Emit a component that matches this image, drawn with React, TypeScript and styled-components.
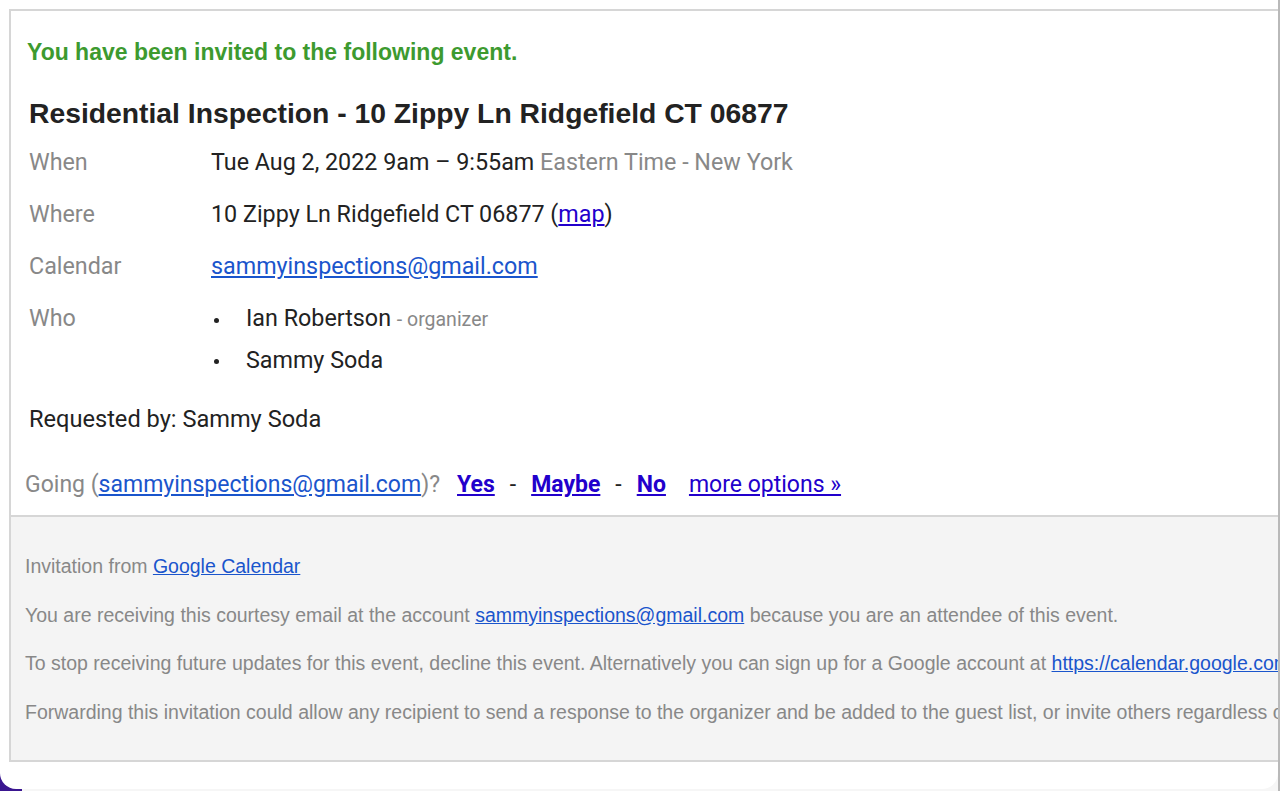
import React from "react";
import styled, { createGlobalStyle } from "styled-components";

const Global = createGlobalStyle`
  html, body { margin: 0; padding: 0; }
  body {
    width: 1280px;
    height: 791px;
    overflow: hidden;
    background: linear-gradient(90deg, #3a1690 0, #3a1690 22px, #f6f6f6 22px);
  }
`;

const Desktop = styled.div`
  display: flex;
  width: 1280px;
  height: 791px;
`;

const Window = styled.div`
  width: 1278px;
  height: 789px;
  background: #ffffff;
  border-radius: 0 0 16px 16px;
  overflow: hidden;
  padding: 9px 0 0 9px;
  box-sizing: border-box;
`;

const EdgeStrip = styled.div`
  width: 2px;
  height: 791px;
  background: #b9b9b9;
`;

const Card = styled.div`
  width: 1320px;
  border: 2px solid #d6d6d6;
  border-right: none;
  background: #ffffff;
  box-sizing: border-box;
`;

const Main = styled.div`
  padding: 27px 0 16px 16px;
  font-family: Roboto, "Liberation Sans", Arial, sans-serif;
  font-size: 23px;
  color: #222222;
`;

const Invited = styled.div`
  font-family: "Liberation Sans", Arial, sans-serif;
  font-weight: bold;
  font-size: 23px;
  line-height: 28px;
  color: #3d9a2f;
`;

const Title = styled.h1`
  margin: 30px 0 0 2px;
  font-family: "Liberation Sans", Arial, sans-serif;
  font-weight: bold;
  font-size: 28.3px;
  line-height: 34px;
  color: #222222;
`;

const Details = styled.div`
  display: grid;
  grid-template-columns: 182px 1fr;
  margin: 10px 0 0 2px;
  font-size: 23.3px;
`;

const Label = styled.div`
  color: #888888;
  line-height: 28px;
  padding: 8px 0 16px;
`;

const Value = styled.div`
  color: #222222;
  line-height: 28px;
  padding: 8px 0 16px;
`;

const Muted = styled.span`
  color: #888888;
`;

const SmallMuted = styled.span`
  color: #888888;
  font-size: 19.5px;
`;

const Link = styled.a`
  color: #1a55cc;
  text-decoration: underline;
`;

const DarkLink = styled.a<{ $bold?: boolean }>`
  color: #2200cc;
  text-decoration: underline;
  font-weight: ${(p) => (p.$bold ? 700 : 400)};
`;

const Guests = styled.ul`
  margin: 0;
  padding: 0;
  list-style: none;
  display: flex;
  flex-direction: column;
  gap: 12px;
`;

const Guest = styled.li`
  display: flex;
  align-items: baseline;
  line-height: 28px;
  white-space: pre;
`;

const Bullet = styled.span`
  flex: 0 0 35px;
  align-self: center;
  &::before {
    content: "";
    display: block;
    width: 5px;
    height: 5px;
    margin: 3px 0 0 3px;
    border-radius: 50%;
    background: #222222;
  }
`;

const Requested = styled.div`
  margin: 15px 0 0 2px;
  line-height: 28px;
  font-size: 23.6px;
  color: #222222;
`;

const Going = styled.div`
  display: flex;
  align-items: baseline;
  margin: 38px 0 0 -2px;
  line-height: 28px;
  color: #888888;
  white-space: nowrap;
`;

const Response = styled.div`
  display: flex;
  align-items: baseline;
  margin-left: 17px;
`;

const Dash = styled.span`
  color: #222222;
  margin: 0 15px;
`;

const MoreOptions = styled(DarkLink)`
  margin-left: 23px;
`;

const Footer = styled.div`
  border-top: 2px solid #d6d6d6;
  background: #f4f4f4;
  padding: 38px 0 0 14px;
  font-family: "Liberation Sans", Arial, sans-serif;
  font-size: 19.5px;
  color: #888888;
  height: 245px;
  box-sizing: border-box;
  overflow: hidden;
`;

const FooterLine = styled.p`
  margin: 0 0 26.5px;
  line-height: 22px;
  white-space: nowrap;
`;

export default function App() {
  const email = "sammyinspections@gmail.com";
  return (
    <>
      <Global />
      <Desktop>
        <Window>
          <Card>
            <Main>
              <Invited>You have been invited to the following event.</Invited>
              <Title>Residential Inspection - 10 Zippy Ln Ridgefield CT 06877</Title>
              <Details>
                <Label>When</Label>
                <Value>
                  Tue Aug 2, 2022 9am – 9:55am <Muted>Eastern Time - New York</Muted>
                </Value>
                <Label>Where</Label>
                <Value>
                  10 Zippy Ln Ridgefield CT 06877 (<DarkLink href="#">map</DarkLink>)
                </Value>
                <Label>Calendar</Label>
                <Value>
                  <Link href="#">{email}</Link>
                </Value>
                <Label>Who</Label>
                <Value>
                  <Guests>
                    <Guest>
                      <Bullet />
                      Ian Robertson <SmallMuted>- organizer</SmallMuted>
                    </Guest>
                    <Guest>
                      <Bullet />
                      Sammy Soda
                    </Guest>
                  </Guests>
                </Value>
              </Details>
              <Requested>Requested by: Sammy Soda</Requested>
              <Going>
                Going (<Link href="#">{email}</Link>)?
                <Response>
                  <DarkLink $bold href="#">Yes</DarkLink>
                  <Dash>-</Dash>
                  <DarkLink $bold href="#">Maybe</DarkLink>
                  <Dash>-</Dash>
                  <DarkLink $bold href="#">No</DarkLink>
                  <MoreOptions href="#">more options »</MoreOptions>
                </Response>
              </Going>
            </Main>
            <Footer>
              <FooterLine>
                Invitation from <Link href="#">Google Calendar</Link>
              </FooterLine>
              <FooterLine>
                You are receiving this courtesy email at the account <Link href="#">{email}</Link> because you are an attendee of this event.
              </FooterLine>
              <FooterLine>
                To stop receiving future updates for this event, decline this event. Alternatively you can sign up for a Google account at <Link href="#">https://calendar.google.com/calendar/</Link> and control your notification settings for your entire calendar.
              </FooterLine>
              <FooterLine>
                Forwarding this invitation could allow any recipient to send a response to the organizer and be added to the guest list, or invite others regardless of their own invitation status, or to modify your RSVP.
              </FooterLine>
            </Footer>
          </Card>
        </Window>
        <EdgeStrip />
      </Desktop>
    </>
  );
}
